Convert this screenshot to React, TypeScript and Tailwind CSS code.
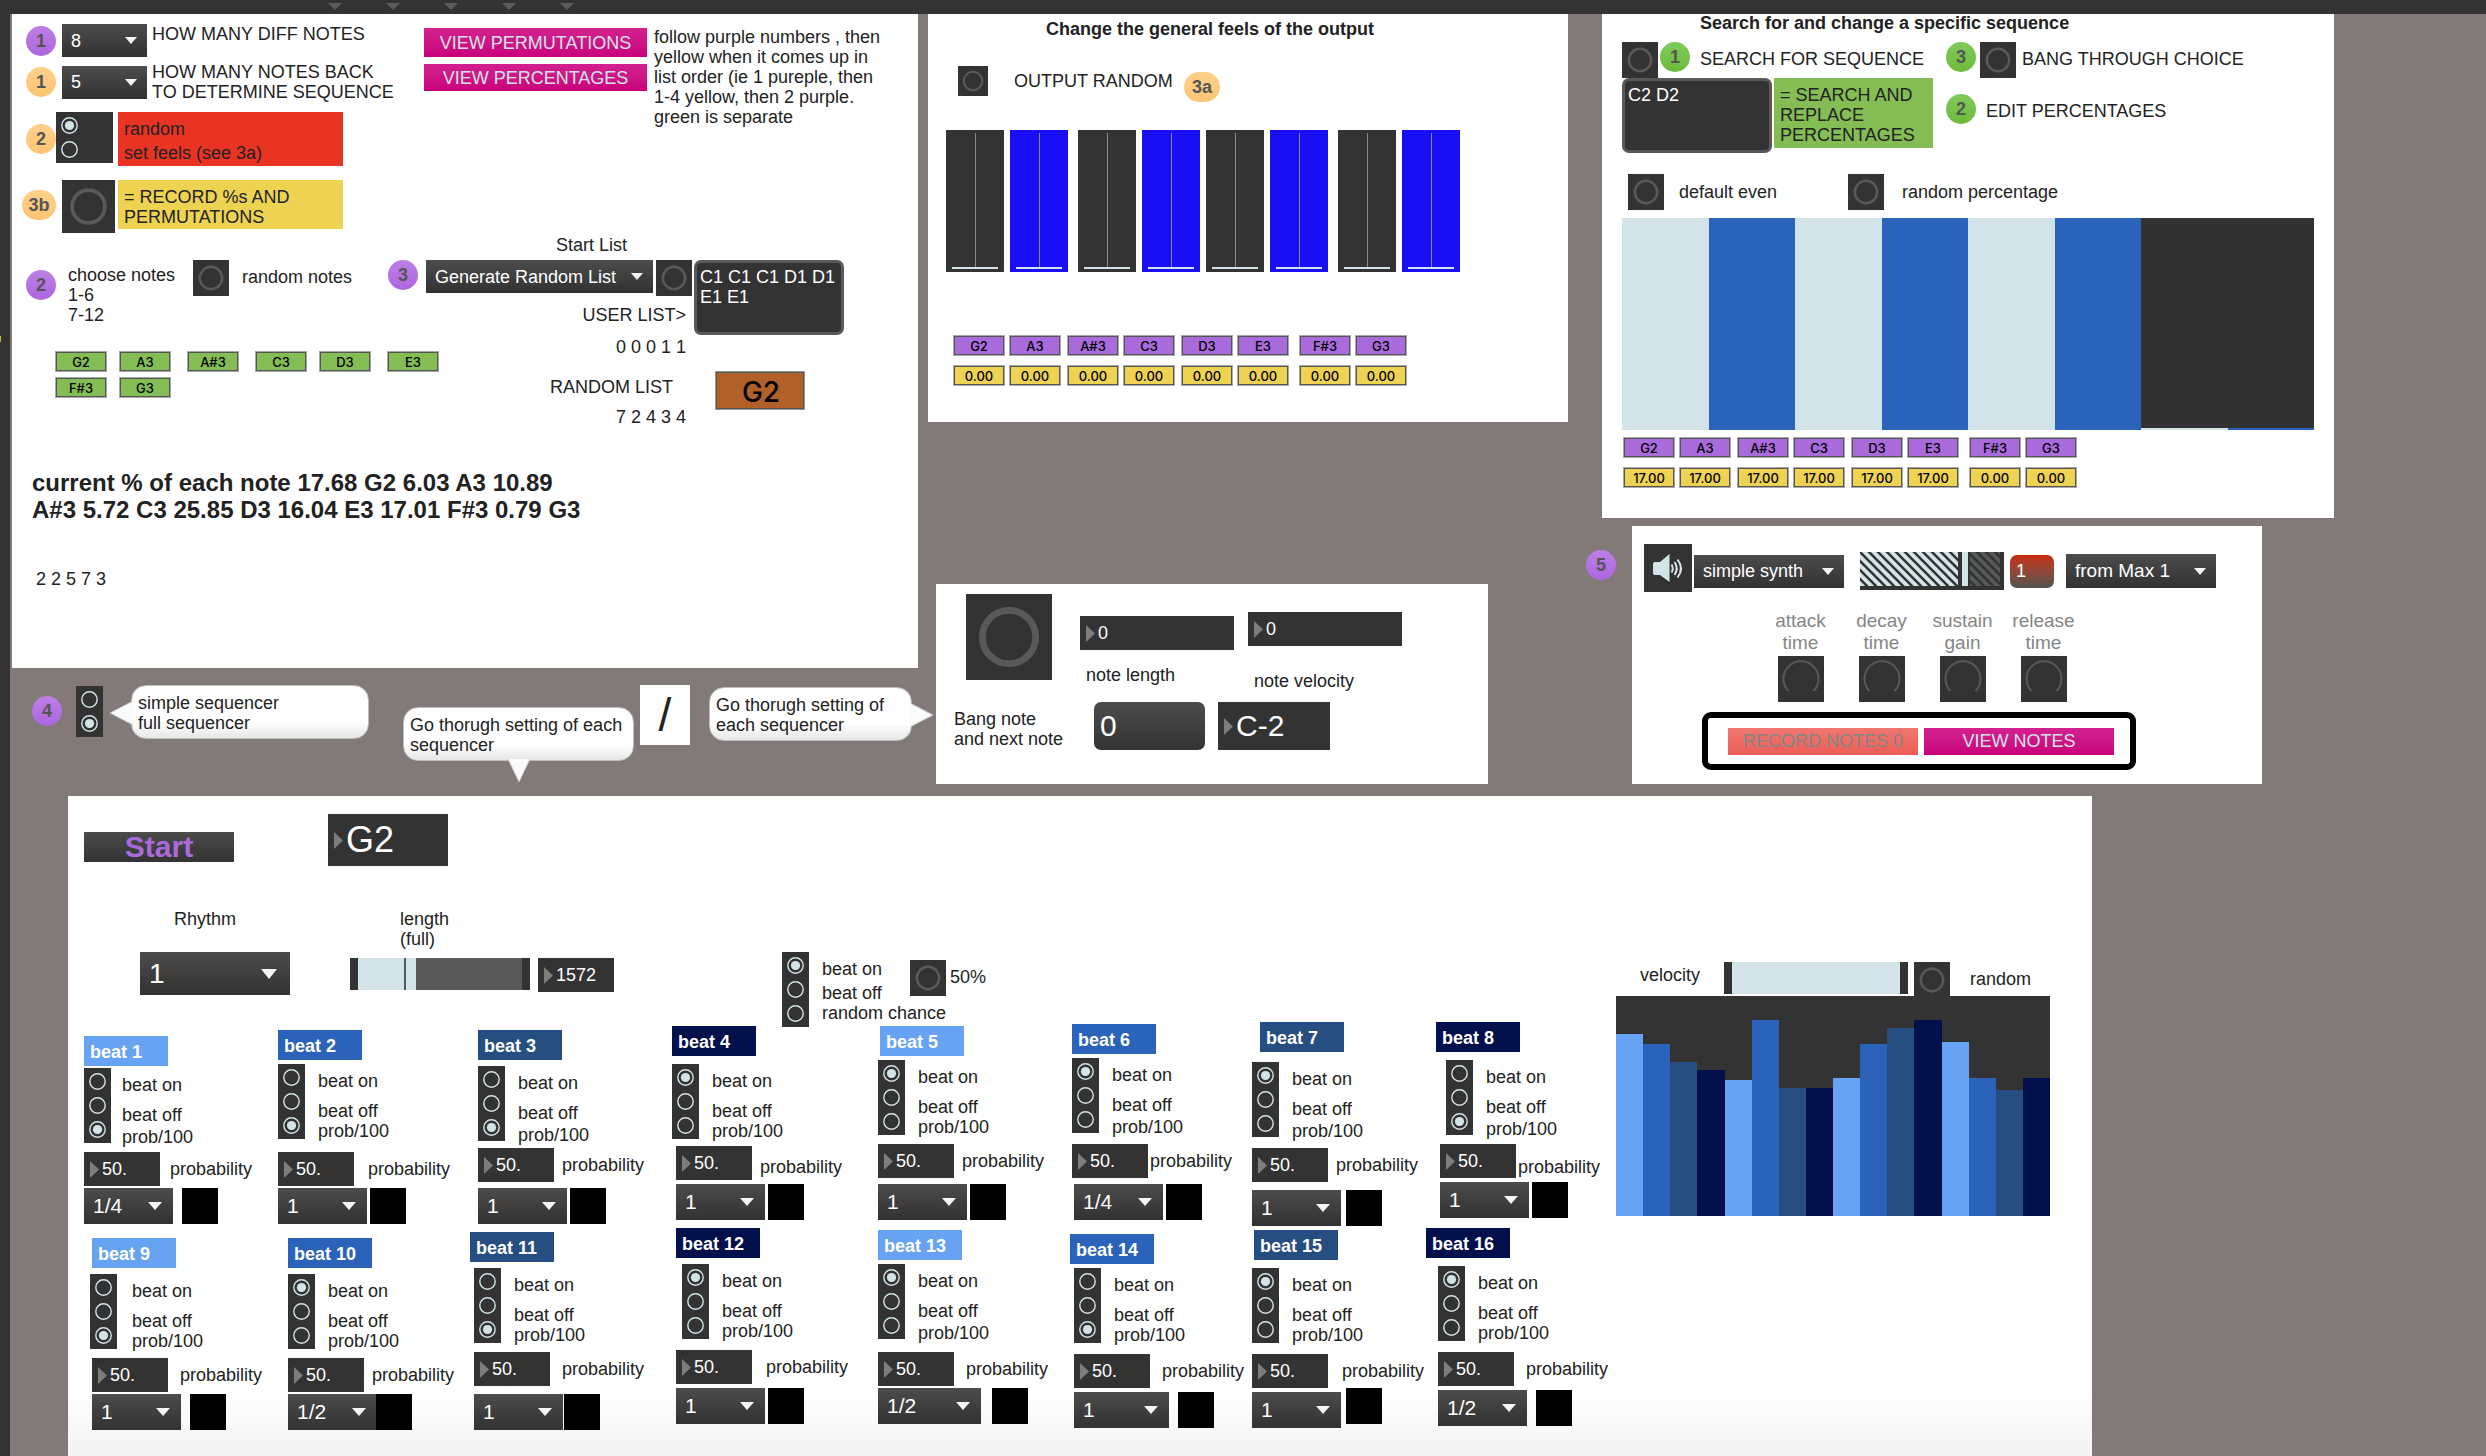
// imports
import { useState } from "react";
import type { ReactNode } from "react";

interface Beat {
  n: number;
  color: string;
  checked: number;
  rate: string;
  menuWidth: string;
  tag: [number, number];
  radio: [number, number];
  text: [number, number];
  probGap: string;
  num: [number, number];
  label: [number, number];
  menu: [number, number];
  swatch: [number, number];
}

const SKY = "bg-[#67a3f2]";
const BLUE = "bg-[#2b63ba]";
const STEEL = "bg-[#264e80]";
const NAVY = "bg-[#02104b]";

const NARROW = "w-[89px]";
const MEDIUM = "w-[95px]";
const WIDE = "w-[103px]";

// The beat objects sit freely on the patch, each one keeps its own position
const beats: Beat[] = [
  { n: 1, color: SKY, checked: 2, rate: "1/4", menuWidth: NARROW, tag: [16, 240], radio: [16, 272], text: [54, 279], probGap: "mt-[2px]", num: [16, 356], label: [102, 363], menu: [16, 392], swatch: [114, 392] },
  { n: 2, color: BLUE, checked: 2, rate: "1", menuWidth: NARROW, tag: [210, 234], radio: [210, 268], text: [250, 275], probGap: "mt-0", num: [210, 356], label: [300, 363], menu: [210, 392], swatch: [302, 392] },
  { n: 3, color: STEEL, checked: 2, rate: "1", menuWidth: NARROW, tag: [410, 234], radio: [410, 270], text: [450, 277], probGap: "mt-[2px]", num: [410, 352], label: [494, 359], menu: [410, 392], swatch: [502, 392] },
  { n: 4, color: NAVY, checked: 0, rate: "1", menuWidth: NARROW, tag: [604, 230], radio: [604, 268], text: [644, 275], probGap: "mt-0", num: [608, 350], label: [692, 361], menu: [608, 388], swatch: [700, 388] },
  { n: 5, color: SKY, checked: 0, rate: "1", menuWidth: NARROW, tag: [812, 230], radio: [810, 264], text: [850, 271], probGap: "mt-0", num: [810, 348], label: [894, 355], menu: [810, 388], swatch: [902, 388] },
  { n: 6, color: BLUE, checked: 0, rate: "1/4", menuWidth: NARROW, tag: [1004, 228], radio: [1004, 262], text: [1044, 269], probGap: "mt-[2px]", num: [1004, 348], label: [1082, 355], menu: [1006, 388], swatch: [1098, 388] },
  { n: 7, color: STEEL, checked: 0, rate: "1", menuWidth: NARROW, tag: [1192, 226], radio: [1184, 266], text: [1224, 273], probGap: "mt-[2px]", num: [1184, 352], label: [1268, 359], menu: [1184, 394], swatch: [1278, 394] },
  { n: 8, color: NAVY, checked: 2, rate: "1", menuWidth: NARROW, tag: [1368, 226], radio: [1378, 264], text: [1418, 271], probGap: "mt-[2px]", num: [1372, 348], label: [1450, 361], menu: [1372, 386], swatch: [1464, 386] },
  { n: 9, color: SKY, checked: 2, rate: "1", menuWidth: NARROW, tag: [24, 442], radio: [22, 478], text: [64, 485], probGap: "mt-0", num: [24, 562], label: [112, 569], menu: [24, 598], swatch: [122, 598] },
  { n: 10, color: BLUE, checked: 0, rate: "1/2", menuWidth: NARROW, tag: [220, 442], radio: [220, 478], text: [260, 485], probGap: "mt-0", num: [220, 562], label: [304, 569], menu: [220, 598], swatch: [308, 598] },
  { n: 11, color: STEEL, checked: 2, rate: "1", menuWidth: NARROW, tag: [402, 436], radio: [406, 472], text: [446, 479], probGap: "mt-0", num: [406, 556], label: [494, 563], menu: [406, 598], swatch: [496, 598] },
  { n: 12, color: NAVY, checked: 0, rate: "1", menuWidth: NARROW, tag: [608, 432], radio: [614, 468], text: [654, 475], probGap: "mt-0", num: [608, 554], label: [698, 561], menu: [608, 592], swatch: [700, 592] },
  { n: 13, color: SKY, checked: 0, rate: "1/2", menuWidth: WIDE, tag: [810, 434], radio: [810, 468], text: [850, 475], probGap: "mt-[2px]", num: [810, 556], label: [898, 563], menu: [810, 592], swatch: [924, 592] },
  { n: 14, color: BLUE, checked: 2, rate: "1", menuWidth: MEDIUM, tag: [1002, 438], radio: [1006, 472], text: [1046, 479], probGap: "mt-0", num: [1006, 558], label: [1094, 565], menu: [1006, 596], swatch: [1110, 596] },
  { n: 15, color: STEEL, checked: 0, rate: "1", menuWidth: NARROW, tag: [1186, 434], radio: [1184, 472], text: [1224, 479], probGap: "mt-0", num: [1184, 558], label: [1274, 565], menu: [1184, 596], swatch: [1278, 592] },
  { n: 16, color: NAVY, checked: 0, rate: "1/2", menuWidth: NARROW, tag: [1358, 432], radio: [1370, 470], text: [1410, 477], probGap: "mt-0", num: [1370, 556], label: [1458, 563], menu: [1370, 594], swatch: [1468, 594] },
];

const notes = ["G2", "A3", "A#3", "C3", "D3", "E3", "F#3", "G3"];
const velocities = [182, 172, 154, 146, 136, 196, 128, 128, 138, 172, 188, 196, 174, 138, 126, 138];
const velocityColors = [SKY, BLUE, STEEL, NAVY];
const percentages = [17, 17, 17, 17, 17, 17, 0, 0];

const badgeColors = {
  purple: "from-[#bd7fe6] to-[#ad66df]",
  orange: "from-[#ffd08a] to-[#fdc574]",
  green: "from-[#7fca5c] to-[#6dbb38]",
};

// Numbered badge
const Badge = ({ color, className = "w-[30px]", children }: { color: keyof typeof badgeColors; className?: string; children: ReactNode }) => (
  <span
    className={`flex h-[30px] shrink-0 items-center justify-center rounded-full bg-linear-to-b font-bold text-[#555] ${badgeColors[color]} ${className}`}
  >
    {children}
  </span>
);

// Round trigger button
const Bang = ({ label, className = "size-[36px]", stroke = 7 }: { label: string; className?: string; stroke?: number }) => (
  <button type="button" aria-label={label} className={`block shrink-0 bg-[#333] ${className}`}>
    <svg viewBox="0 0 100 100" className="h-full w-full">
      <circle cx="50" cy="50" r="31" fill="none" stroke="#595959" strokeWidth={stroke} />
    </svg>
  </button>
);

interface MenuProps {
  label: string;
  value: string;
  options: string[];
  className: string;
  arrow?: string;
}

// Drop-down menu
const Menu = ({ label, value, options, className, arrow = "right-[10px] h-[7px] w-[12px]" }: MenuProps) => (
  <div className={`relative shrink-0 ${className}`}>
    <select
      aria-label={label}
      defaultValue={value}
      className="block h-full w-full appearance-none bg-linear-to-b from-[#4c4c4c] to-[#323232] pl-[9px] text-white outline-none"
    >
      {options.map((option) => (
        <option key={option}>{option}</option>
      ))}
    </select>
    <svg viewBox="0 0 12 7" preserveAspectRatio="none" className={`pointer-events-none absolute inset-y-0 my-auto ${arrow}`}>
      <path d="M0 0H12L6 7Z" fill="#f5f5f5" />
    </svg>
  </div>
);

// Number box with the small triangle on the left
const NumberBox = ({ label, value, className }: { label: string; value: string; className: string }) => (
  <div className={`flex shrink-0 items-center bg-[#333] pl-[6px] ${className}`}>
    <svg viewBox="0 0 9 17" className="h-[17px] w-[9px] shrink-0">
      <path d="M0 0L9 8.5L0 17Z" fill="#7d7d7d" />
    </svg>
    <input aria-label={label} defaultValue={value} className="ml-[3px] w-full min-w-0 bg-transparent text-white outline-none" />
  </div>
);

const TextBox = ({ label, value }: { label: string; value: string }) => (
  <textarea
    aria-label={label}
    defaultValue={value}
    className="block h-[75px] w-[150px] shrink-0 resize-none overflow-hidden rounded-[7px] border-[3px] border-[#595959] bg-[#333] px-[3px] pt-[4px] text-white outline-none"
  />
);

// Vertical group of radios, labels are tied by id
const Radios = ({ name, count, initial, className = "w-[27px]" }: { name: string; count: number; initial: number; className?: string }) => {
  const [selected, setSelected] = useState(initial);

  return (
    <div className={`flex shrink-0 flex-col gap-[7px] self-start bg-[#333] p-[5px] ${className}`}>
      {Array.from({ length: count }, (_, i) => (
        <span key={i} className="relative block size-[17px]">
          <input
            type="radio"
            id={`${name}-${i}`}
            name={name}
            checked={selected === i}
            onChange={() => setSelected(i)}
            className="absolute inset-0 m-0 size-full opacity-0"
          />
          <svg viewBox="0 0 17 17" className="pointer-events-none size-full">
            <circle cx="8.5" cy="8.5" r="7.7" fill="none" stroke="#d3e4e8" strokeWidth="1.4" />
            {selected === i && <circle cx="8.5" cy="8.5" r="4.6" fill="#d3e4e8" />}
          </svg>
        </span>
      ))}
    </div>
  );
};

// Small bordered cell that shows a note or a value
const Cell = ({ className, children }: { className: string; children: ReactNode }) => (
  <span
    className={`flex h-[19px] w-[50px] items-center justify-center border border-[#555] pt-[2px] font-[Inter,sans-serif] text-[13px] leading-none font-medium text-black shadow-[0_0_0_1px_#aaa] ${className}`}
  >
    {children}
  </span>
);

const NoteValues = ({ values, className }: { values: string[]; className: string }) => (
  <div className={`grid grid-cols-[56px_58px_56px_58px_56px_62px_56px_50px] gap-y-[11px] ${className}`}>
    {notes.map((note) => (
      <Cell key={note} className="bg-[#a96bdc]">{note}</Cell>
    ))}
    {values.map((value, i) => (
      <Cell key={i} className="bg-[#eed352]">{value}</Cell>
    ))}
  </div>
);

const Dial = ({ label }: { label: [string, string] }) => (
  <div className="flex w-[81px] flex-col items-center text-center text-[19px] leading-[22px] text-[#858585]">
    <span>{label[0]}</span>
    <span>{label[1]}</span>
    <div className="relative mt-[2px] size-[46px] bg-[#333]">
      <input type="range" aria-label={`${label[0]} ${label[1]}`} defaultValue={0} className="absolute inset-0 size-full opacity-0" />
      <svg viewBox="0 0 46 46" className="pointer-events-none size-full">
        <path d="M10.5 35A17.5 17.5 0 1 1 35.5 35" fill="none" stroke="#595959" strokeWidth="2" />
      </svg>
    </div>
  </div>
);

// Speech bubble, the tail points at the object it explains
const tails = {
  left: { box: "-left-[23px] top-[15px] h-[24px] w-[24px]", view: "0 0 24 24", d: "M24 0L1 12L24 24" },
  right: { box: "-right-[23px] top-[15px] h-[24px] w-[24px]", view: "0 0 24 24", d: "M0 0L23 12L0 24" },
  down: { box: "-bottom-[23px] left-[104px] h-[24px] w-[22px]", view: "0 0 22 24", d: "M0 0L11 23L22 0" },
};

const Bubble = ({ tail, className, children }: { tail: keyof typeof tails; className: string; children: ReactNode }) => (
  <div
    className={`relative h-[54px] shrink-0 rounded-[15px] border border-[#bdbdbd] bg-linear-to-b from-white from-70% to-[#e6e6e6] pt-[7px] pl-[6px] ${className}`}
  >
    {children}
    <svg viewBox={tails[tail].view} className={`absolute ${tails[tail].box}`}>
      <path d={tails[tail].d} fill="#fbfbfb" stroke="#c4c4c4" />
    </svg>
  </div>
);

const BeatObjects = ({ beat }: { beat: Beat }) => {
  const at = ([left, top]: [number, number]) => ({ left, top });
  const name = `beat-${beat.n}`;

  return (
    <>
      <h3 style={at(beat.tag)} className={`absolute h-[30px] w-[84px] pt-[6px] pl-[6px] font-bold text-white ${beat.color}`}>
        beat {beat.n}
      </h3>
      <div style={at(beat.radio)} className="absolute">
        <Radios name={name} count={3} initial={beat.checked} />
      </div>
      <div style={at(beat.text)} className="absolute flex flex-col whitespace-nowrap">
        <label htmlFor={`${name}-0`}>beat on</label>
        <label htmlFor={`${name}-1`} className="mt-[10px]">beat off</label>
        <label htmlFor={`${name}-2`} className={beat.probGap}>prob/100</label>
      </div>
      <div style={at(beat.num)} className="absolute">
        <NumberBox label={`beat ${beat.n} probability`} value="50." className="h-[34px] w-[76px]" />
      </div>
      <span style={at(beat.label)} className="absolute">probability</span>
      <div style={at(beat.menu)} className="absolute">
        <Menu
          label={`beat ${beat.n} length`}
          value={beat.rate}
          options={["1", "1/2", "1/4"]}
          className={`h-[36px] text-[21px] ${beat.menuWidth}`}
          arrow="right-[11px] h-[8px] w-[14px]"
        />
      </div>
      <span style={at(beat.swatch)} className="absolute size-[36px] bg-black" />
    </>
  );
};

// Note choice and lists
const NotesPanel = () => (
  <section className="bg-white pt-[10px] pb-[79px] pl-[14px]">
    <div className="flex items-start">
      <div className="flex w-[398px] flex-col">
        <div className="flex h-[33px]">
          <Badge color="purple" className="mt-[2px] w-[30px]">1</Badge>
          <Menu label="How many diff notes" value="8" options={["6", "7", "8"]} className="ml-[6px] h-[33px] w-[85px]" />
          <p className="ml-[5px] whitespace-nowrap">HOW MANY DIFF NOTES</p>
        </div>
        <div className="mt-[5px] flex items-center">
          <Badge color="orange">1</Badge>
          <Menu label="How many notes back" value="5" options={["3", "4", "5"]} className="ml-[6px] h-[33px] w-[85px]" />
          <p className="ml-[5px] whitespace-nowrap">
            HOW MANY NOTES BACK
            <br />
            TO DETERMINE SEQUENCE
          </p>
        </div>
        <div className="mt-[10px] flex items-center">
          <Badge color="orange">2</Badge>
          <Radios name="feels" count={2} initial={0} className="w-[57px]" />
          <div className="ml-[5px] flex h-[54px] w-[225px] flex-col bg-[#e93424] pt-[5px] pl-[6px] leading-6">
            <label htmlFor="feels-0">random</label>
            <label htmlFor="feels-1">set feels (see 3a)</label>
          </div>
        </div>
        <div className="mt-[14px] -ml-1 flex items-start">
          <Badge color="orange" className="mt-[10px] w-[34px]">3b</Badge>
          <Bang label="Record" className="ml-[6px] size-[53px]" />
          <p className="ml-[3px] h-[49px] w-[225px] bg-[#eed352] pt-[7px] pl-[6px]">= RECORD %s AND PERMUTATIONS</p>
        </div>
      </div>

      <div className="mt-[4px] flex w-[223px] flex-col gap-[7px] text-[#d3e4e8]">
        <button type="button" className="h-[29px] bg-linear-to-b from-[#d2218f] to-[#c9007b]">VIEW PERMUTATIONS</button>
        <button type="button" className="h-[27px] bg-linear-to-b from-[#d2218f] to-[#c9007b]">VIEW PERCENTAGES</button>
      </div>
      <p className="mt-[3px] ml-[7px] w-[240px]">
        follow purple numbers , then yellow when it comes up in list order (ie 1 pureple, then 1-4 yellow, then 2 purple. green is separate
      </p>
    </div>

    <div className="mt-[2px] flex items-start">
      <div className="w-[362px] pt-[25px]">
        <div className="flex items-start">
          <Badge color="purple" className="mt-[10px] w-[30px]">2</Badge>
          <p className="mt-[5px] ml-[12px] w-[125px]">
            choose notes
            <br />
            1-6
            <br />
            7-12
          </p>
          <Bang label="Random notes" />
          <p className="mt-[7px] ml-[13px]">random notes</p>
        </div>
        <div className="mt-[27px] ml-[30px] grid grid-cols-[64px_68px_68px_64px_68px_50px] gap-y-[7px]">
          {notes.map((note) => (
            <Cell key={note} className="bg-[#83bd54]">{note}</Cell>
          ))}
        </div>
      </div>

      <div className="flex w-[304px] flex-col">
        <p className="ml-[168px]">Start List</p>
        <div className="mt-[5px] flex items-start">
          <Badge color="purple">3</Badge>
          <Menu
            label="Start List"
            value="Generate Random List"
            options={["Generate Random List", "User List"]}
            className="ml-[8px] h-[33px] w-[227px]"
          />
          <Bang label="Start list" className="ml-[3px] size-[36px]" />
        </div>
        <div className="mt-[9px] flex flex-col items-end pr-[6px]">
          <p>USER LIST&gt;</p>
          <p className="mt-[12px]">0 0 0 1 1</p>
          <p className="mt-[20px] mr-[13px]">RANDOM LIST</p>
          <p className="mt-[10px]">7 2 4 3 4</p>
        </div>
      </div>

      <div className="ml-[2px] pt-[25px]">
        <TextBox label="User list" value="C1 C1 C1 D1 D1 E1 E1" />
        <output className="mt-[37px] ml-[22px] flex h-[37px] w-[88px] items-center justify-center border border-[#555] bg-[#b06028] pt-[3px] pl-[2px] font-[Inter,sans-serif] text-[28px] leading-none font-medium text-black shadow-[0_0_0_1px_#999]">
          G2
        </output>
      </div>
    </div>

    <p className="mt-[42px] ml-[6px] text-2xl leading-[27px] font-bold whitespace-nowrap">
      current % of each note 17.68 G2 6.03 A3 10.89
      <br />
      A#3 5.72 C3 25.85 D3 16.04 E3 17.01 F#3 0.79 G3
    </p>
    <p className="mt-[46px] ml-[10px]">2 2 5 7 3</p>
  </section>
);

// General feels of the output
const FeelsPanel = () => (
  <section className="w-[640px] bg-white pt-[5px] pb-[37px]">
    <h2 className="ml-[118px] font-bold whitespace-nowrap">Change the general feels of the output</h2>
    <div className="mt-[27px] ml-[30px] flex items-start">
      <Bang label="Output random" className="size-[30px]" />
      <p className="mt-[5px] ml-[26px] w-[170px] whitespace-nowrap">OUTPUT RANDOM</p>
      <Badge color="orange" className="mt-[6px] w-[36px]">3a</Badge>
    </div>
    <div className="mt-[28px] ml-[18px] grid grid-cols-[64px_68px_64px_64px_64px_68px_64px_58px]">
      {notes.map((note, i) => (
        <div key={note} className={`relative flex h-[142px] w-[58px] flex-col items-center pt-[3px] ${i % 2 ? "bg-[#1a0ef5]" : "bg-[#333]"}`}>
          <span className="h-[134px] w-px bg-[#8a8a8a]" />
          <span className="h-[2px] w-[46px] bg-[#d3e4e8]" />
          <input
            type="range"
            aria-label={`${note} feel`}
            defaultValue={0}
            className="absolute inset-0 size-full opacity-0 [direction:rtl] [writing-mode:vertical-lr]"
          />
        </div>
      ))}
    </div>
    <NoteValues values={notes.map(() => "0.00")} className="mt-[64px] ml-[26px]" />
  </section>
);

// Search for a sequence and edit its percentages
const SearchPanel = () => (
  <section className="ml-4 w-[732px] bg-white pb-[31px]">
    <h2 className="-mt-px ml-[98px] font-bold whitespace-nowrap">Search for and change a specific sequence</h2>
    <div className="mt-[9px] ml-5 flex items-start">
      <Bang label="Search for sequence" />
      <Badge color="green" className="ml-[2px] w-[30px]">1</Badge>
      <p className="mt-[7px] ml-[10px] w-[246px] whitespace-nowrap">SEARCH FOR SEQUENCE</p>
      <Badge color="green">3</Badge>
      <Bang label="Bang through choice" className="ml-[4px] size-[36px]" />
      <p className="mt-[7px] ml-[6px] whitespace-nowrap">BANG THROUGH CHOICE</p>
    </div>
    <div className="ml-5 flex items-start">
      <TextBox label="Sequence" value="C2 D2" />
      <p className="ml-[2px] h-[70px] w-[159px] bg-[#83bd54] pt-[7px] pl-[6px]">= SEARCH AND REPLACE PERCENTAGES</p>
      <Badge color="green" className="mt-4 ml-[13px] w-[30px]">2</Badge>
      <p className="mt-[23px] ml-[10px] whitespace-nowrap">EDIT PERCENTAGES</p>
    </div>
    <div className="mt-[21px] ml-[26px] flex items-center">
      <Bang label="Default even" />
      <p className="ml-[15px] w-[169px]">default even</p>
      <Bang label="Random percentage" />
      <p className="ml-[18px]">random percentage</p>
    </div>
    <div className="mt-[8px] ml-5 flex h-[212px] w-[692px] items-end bg-[#323232]">
      {percentages.map((value, i) => (
        <span key={i} className={`flex-1 ${value ? "h-full" : "h-[2px]"} ${i % 2 ? BLUE : "bg-[#d3e4e8]"}`} />
      ))}
    </div>
    <NoteValues values={percentages.map((value) => value.toFixed(2))} className="mt-[8px] ml-[22px]" />
  </section>
);

const SynthPanel = () => (
  <section className="w-[630px] bg-white pt-[18px] pb-[14px] pl-[12px]">
    <div className="flex items-start">
      <button type="button" aria-label="Audio on" className="size-[48px] bg-[#333]">
        <svg viewBox="0 0 48 48" className="size-full">
          <path d="M11 18H16L25.5 10V38L16 31H11Q9 31 9 29V20Q9 18 11 18Z" fill="#d3e4e8" />
          <path d="M27.5 20.5Q30 24.5 27.5 28.5M30.5 18Q35 24.5 30.5 31M33.5 15.5Q40.5 24.5 33.5 33.5" fill="none" stroke="#d3e4e8" strokeWidth="2" />
        </svg>
      </button>
      <div className="mt-[8px] ml-[2px] flex items-center">
        <Menu label="Synth" value="simple synth" options={["simple synth", "midi"]} className="h-[33px] w-[150px]" />
        <div className="relative ml-4 h-[38px] w-[144px] bg-[#333]">
          <svg viewBox="0 0 144 38" className="size-full">
            <defs>
              <pattern id="hatch" width="9" height="9" patternUnits="userSpaceOnUse">
                <rect width="9" height="9" fill="#d3e4e8" />
                <path d="M-9 -9L18 18M-9 0L9 18M0 -9L18 9" stroke="#333" strokeWidth="2.6" />
              </pattern>
              <pattern id="hatchOff" width="9" height="9" patternUnits="userSpaceOnUse">
                <rect width="9" height="9" fill="#595959" />
                <path d="M-9 -9L18 18M-9 0L9 18M0 -9L18 9" stroke="#333" strokeWidth="2.6" />
              </pattern>
            </defs>
            <rect width="98" height="34" fill="url(#hatch)" />
            <rect x="102" width="6" height="34" fill="#d3e4e8" />
            <rect x="110" width="30" height="34" fill="url(#hatchOff)" />
          </svg>
          <input type="range" aria-label="Gain" defaultValue={75} className="absolute inset-0 size-full opacity-0" />
        </div>
        <input
          aria-label="Channel"
          defaultValue="1"
          className="ml-[6px] h-[33px] w-[44px] rounded-[7px] bg-linear-to-b from-[#c62806] to-[#51504e] pl-[6px] text-white outline-none"
        />
        <Menu label="Port" value="from Max 1" options={["from Max 1", "from Max 2"]} className="ml-[12px] h-[34px] w-[150px] text-[19px]" />
      </div>
    </div>
    <div className="mt-[18px] ml-[116px] flex">
      <Dial label={["attack", "time"]} />
      <Dial label={["decay", "time"]} />
      <Dial label={["sustain", "gain"]} />
      <Dial label={["release", "time"]} />
    </div>
    <div className="mt-[10px] ml-[58px] flex h-[58px] w-[434px] items-center gap-[6px] rounded-[9px] border-[6px] border-black pl-5">
      <button type="button" className="h-[27px] w-[190px] bg-linear-to-b from-[#ef7770] to-[#ec5e57] text-[#858585]">RECORD NOTES 0</button>
      <button type="button" className="h-[27px] w-[190px] bg-linear-to-b from-[#d2218f] to-[#c9007b] text-[#d3e4e8]">VIEW NOTES</button>
    </div>
  </section>
);

const SequencerChoice = () => (
  <div className="flex items-start pt-[17px] pl-5">
    <Badge color="purple" className="mt-[11px] w-[30px]">4</Badge>
    <Radios name="sequencer" count={2} initial={1} className="mt-px ml-[14px] w-[27px]" />
    <Bubble tail="left" className="ml-[28px] w-[238px]">
      <label htmlFor="sequencer-0" className="block">simple sequencer</label>
      <label htmlFor="sequencer-1" className="block">full sequencer</label>
    </Bubble>
    <Bubble tail="down" className="mt-[22px] ml-[34px] w-[231px]">
      Go thorugh setting of each sequencer
    </Bubble>
    <p className="ml-[6px] flex h-[60px] w-[50px] items-center justify-center bg-[#fdfdfd] text-[46px]">/</p>
    <Bubble tail="right" className="mt-[2px] ml-[19px] w-[203px]">
      Go thorugh setting of each sequencer
    </Bubble>
  </div>
);

const SimpleSequencer = () => (
  <section className="mt-[162px] ml-2 flex h-[200px] w-[552px] bg-white">
    <div className="w-[144px] pt-[10px] pl-[18px]">
      <Bang label="Bang note" stroke={8} className="ml-[12px] size-[86px]" />
      <p className="mt-[29px] whitespace-nowrap">
        Bang note
        <br />
        and next note
      </p>
    </div>
    <div className="pt-[28px]">
      <div className="flex items-start gap-[14px]">
        <div className="pt-[4px]">
          <NumberBox label="note length" value="0" className="h-[34px] w-[154px]" />
          <p className="mt-[15px] ml-[6px]">note length</p>
        </div>
        <div>
          <NumberBox label="note velocity" value="0" className="h-[34px] w-[154px]" />
          <p className="mt-[25px] ml-[6px]">note velocity</p>
        </div>
      </div>
      <div className="mt-[11px] ml-[14px] flex gap-[13px] text-[30px]">
        <button type="button" className="h-[48px] w-[111px] rounded-[7px] bg-linear-to-b from-[#4c4c4c] to-[#333] pl-[6px] text-left text-white">0</button>
        <NumberBox label="next note" value="C-2" className="h-[48px] w-[112px]" />
      </div>
    </div>
  </section>
);

const FullSequencer = () => (
  <section className="relative mt-3 ml-[58px] flex w-[2024px] flex-1 bg-linear-to-b from-white from-90% to-[#f3f3f3]">
    <div className="w-[1548px] pt-[18px] pl-4">
      <div className="flex items-start">
        <button type="button" className="mt-[18px] h-[30px] w-[150px] bg-linear-to-b from-[#4c4c4c] to-[#333] text-[30px] leading-[30px] font-bold text-[#a96bdc]">
          Start
        </button>
        <NumberBox label="current note" value="G2" className="ml-[94px] h-[52px] w-[120px] text-[36px]" />
      </div>
      <div className="mt-[43px] flex items-start pl-[56px]">
        <div>
          <p className="ml-[34px]">Rhythm</p>
          <Menu
            label="Rhythm"
            value="1"
            options={["1", "2", "3"]}
            className="mt-[23px] h-[43px] w-[150px] text-[28px]"
            arrow="right-[13px] h-[10px] w-[16px]"
          />
        </div>
        <div className="ml-[60px]">
          <p className="ml-[50px]">
            length
            <br />
            (full)
          </p>
          <div className="mt-[9px] flex gap-[8px]">
            <div className="relative flex h-[32px] w-[180px] bg-[#333] px-[8px]">
              <span className="w-[46px] bg-[#d3e4e8]" />
              <span className="w-[2px] bg-[#595959]" />
              <span className="w-[10px] bg-[#d3e4e8]" />
              <span className="flex-1 bg-[#595959]" />
              <input type="range" aria-label="length (full)" defaultValue={35} className="absolute inset-0 size-full opacity-0" />
            </div>
            <NumberBox label="length value" value="1572" className="h-[34px] w-[76px]" />
          </div>
        </div>
        <div className="mt-[43px] ml-[168px] flex items-start">
          <Radios name="all" count={3} initial={0} />
          <div className="mt-[7px] ml-[13px] flex w-[88px] flex-col whitespace-nowrap">
            <label htmlFor="all-0">beat on</label>
            <label htmlFor="all-1" className="mt-[4px]">beat off</label>
            <label htmlFor="all-2">random chance</label>
          </div>
          <Bang label="50%" className="mt-[8px] size-[36px]" />
          <p className="mt-[15px] ml-[4px]">50%</p>
        </div>
      </div>
    </div>

    {beats.map((beat) => (
      <BeatObjects key={beat.n} beat={beat} />
    ))}

    <div className="w-[434px] pt-[166px]">
      <div className="flex h-[34px] items-start">
        <p className="mt-[3px] ml-[24px] w-[84px]">velocity</p>
        <div className="relative flex h-[32px] w-[184px] bg-[#333] px-[8px]">
          <span className="flex-1 bg-[#d3e4e8]" />
          <input type="range" aria-label="velocity" defaultValue={100} className="absolute inset-0 size-full opacity-0" />
        </div>
        <Bang label="Random velocity" className="ml-[6px] size-[36px]" />
        <p className="mt-[7px] ml-5">random</p>
      </div>
      <div className="flex h-[220px] items-end bg-[#333]">
        {velocities.map((value, i) => (
          <span key={i} style={{ height: value }} className={`flex-1 ${velocityColors[i % 4]}`} />
        ))}
      </div>
    </div>
  </section>
);

export default function App() {
  return (
    <main className="flex min-h-screen flex-col overflow-hidden bg-[#817a79] font-['Liberation_Sans',Arial,sans-serif] text-[18px] leading-5 text-[#222]">
      {/* Frame of the patcher window */}
      <header className="flex h-[14px] gap-[44px] bg-[#333] pt-[3px] pl-[328px]">
        {[0, 1, 2, 3, 4].map((i) => (
          <svg key={i} viewBox="0 0 14 7" className="h-[7px] w-[14px]">
            <path d="M0 0H14L7 7Z" fill="#5c5c5c" />
          </svg>
        ))}
      </header>

      <div className="flex flex-1">
        <aside className="w-[10px] shrink-0 bg-[#333] pt-[322px]">
          <span className="block h-[6px] w-px bg-[#c9b72f]" />
        </aside>

        <div className="flex flex-1 flex-col">
          <div className="flex items-start pl-[2px]">
            <div className="w-[916px] shrink-0">
              <div className="w-[906px]">
                <NotesPanel />
              </div>
              <SequencerChoice />
            </div>
            <div className="shrink-0">
              <FeelsPanel />
              <SimpleSequencer />
            </div>
            <div className="ml-[18px] flex shrink-0 flex-col gap-2">
              <SearchPanel />
              <div className="flex items-start gap-4">
                <Badge color="purple" className="mt-6 w-[30px]">5</Badge>
                <SynthPanel />
              </div>
            </div>
          </div>
          <FullSequencer />
        </div>
      </div>
    </main>
  );
}
